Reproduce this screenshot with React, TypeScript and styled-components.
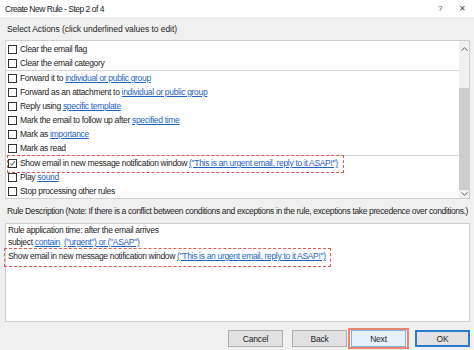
import styled, { createGlobalStyle } from "styled-components";

const GlobalStyle = createGlobalStyle`
  html, body {
    margin: 0;
    padding: 0;
    background: #f0f0f0;
    overflow: hidden;
  }
  body {
    font-family: "Liberation Sans", Arial, sans-serif;
    font-size: 8.5px;
    letter-spacing: -0.32px;
    color: #1e1e1e;
  }
`;

const Dialog = styled.div`
  width: 474px;
  height: 350px;
  display: flex;
  flex-direction: column;
  background: #f0f0f0;
`;

const TitleBar = styled.div`
  height: 17px;
  background: #fff;
  display: flex;
  align-items: center;
  padding-left: 5px;
  color: #222;
`;

const Title = styled.span`
  font-size: 8.5px;
  letter-spacing: -0.5px;
`;

const TitleControls = styled.div`
  margin-left: auto;
  display: flex;
  align-items: center;
  height: 100%;
`;

const TitleBtn = styled.span<{ $w: number }>`
  width: ${(p) => p.$w}px;
  display: flex;
  justify-content: center;
  align-items: center;
  color: #444;
  font-size: 8px;
`;

const Body = styled.div`
  flex: 1;
  display: flex;
  flex-direction: column;
  padding: 0 4px 0 5px;
`;

const SectionLabel = styled.div<{ $h: number; $ls?: number }>`
  height: ${(p) => p.$h}px;
  display: flex;
  align-items: center;
  padding-left: 2px;
  white-space: nowrap;
  letter-spacing: ${(p) => p.$ls ?? -0.32}px;
`;

const ListBox = styled.div`
  height: 159px;
  box-sizing: border-box;
  border: 1px solid #cfcfcf;
  background: #fff;
  display: flex;
`;

const Items = styled.div`
  flex: 1;
  padding-top: 1px;
`;

const Group = styled.div<{ $last?: boolean }>`
  border-bottom: ${(p) => (p.$last ? "none" : "1px solid #d4d4d4")};
`;

const Row = styled.div<{ $marked?: boolean }>`
  position: relative;
  height: 14px;
  display: flex;
  align-items: center;
  gap: 3px;
  padding-left: 2px;
  width: ${(p) => (p.$marked ? "fit-content" : "auto")};
  white-space: nowrap;
  ${(p) =>
    p.$marked &&
    `
    &::after {
      content: "";
      position: absolute;
      left: 1px;
      top: -1px;
      bottom: -3px;
      right: -6px;
      border: 1px dashed #e45a50;
    }
  `}
`;

const Box = styled.span`
  width: 9px;
  height: 9px;
  box-sizing: border-box;
  border: 1px solid #333;
  background: #fff;
  display: flex;
  align-items: center;
  justify-content: center;
  flex-shrink: 0;
`;

const Link = styled.span`
  color: #1f63c4;
  text-decoration: underline;
`;

const Scrollbar = styled.div`
  width: 10px;
  background: #f0f0f0;
  display: flex;
  flex-direction: column;
  align-items: center;
`;

const Arrow = styled.div<{ $h: number }>`
  height: ${(p) => p.$h}px;
  width: 100%;
  display: flex;
  align-items: center;
  justify-content: center;
`;

const Thumb = styled.div`
  margin-top: 32px;
  width: 100%;
  height: 102px;
  background: #cdcdcd;
`;

const DescBox = styled.div`
  height: 99px;
  box-sizing: border-box;
  border: 1px solid #cfcfcf;
  background: #fff;
  padding-left: 2px;
`;

const DescLine = styled.div`
  height: 12px;
  display: flex;
  align-items: center;
  white-space: nowrap;
`;

const MarkedLine = styled.div`
  display: inline-flex;
  align-items: center;
  height: 12px;
  margin-left: -4px;
  padding: 1px 4px 4px 3px;
  border: 1px dashed #e45a50;
  white-space: nowrap;
`;

const ButtonRow = styled.div`
  display: flex;
  justify-content: flex-end;
  align-items: center;
  padding-top: 6px;
`;

const Button = styled.button<{ $ml?: number; $primary?: boolean; $hot?: boolean }>`
  margin-left: ${(p) => p.$ml ?? 0}px;
  width: 55px;
  height: 17px;
  box-sizing: border-box;
  padding: 0;
  font: inherit;
  letter-spacing: -0.2px;
  color: #1e1e1e;
  background: ${(p) => (p.$hot ? "#e5f1fb" : "#e1e1e1")};
  border: ${(p) =>
    p.$primary ? "2px solid #2a7bd0" : p.$hot ? "1px solid #7eb4ea" : "1px solid #adadad"};
`;

const HotFrame = styled.div<{ $ml?: number }>`
  margin-left: ${(p) => p.$ml ?? 0}px;
  border: 2px solid #e9866b;
  padding: 0 1px;
  display: flex;
`;

const Chevron = ({ up }: { up?: boolean }) => (
  <svg width="7" height="4" viewBox="0 0 7 4">
    <polyline
      points={up ? "0.5,3.5 3.5,0.8 6.5,3.5" : "0.5,0.5 3.5,3.2 6.5,0.5"}
      fill="none"
      stroke="#606060"
      strokeWidth="1"
    />
  </svg>
);

const Check = () => (
  <svg width="9" height="9" viewBox="0 0 9 9">
    <polyline points="1.5,4.5 3.5,6.8 7.5,1.5" fill="none" stroke="#222" strokeWidth="1.1" />
  </svg>
);

type Item = { text: string; link?: string; checked?: boolean; marked?: boolean };

const groups: Item[][] = [
  [{ text: "Clear the email flag" }, { text: "Clear the email category" }],
  [
    { text: "Forward it to ", link: "individual or public group" },
    { text: "Forward as an attachment to ", link: "individual or public group" },
    { text: "Reply using ", link: "specific template" },
    { text: "Mark the email to follow up after ", link: "specified time" },
    { text: "Mark as ", link: "importance" },
    { text: "Mark as read" },
  ],
  [
    {
      text: "Show email in new message notification window ",
      link: "(\"This is an urgent email, reply to it ASAP!\")",
      checked: true,
      marked: true,
    },
    { text: "Play ", link: "sound" },
    { text: "Stop processing other rules" },
  ],
];

export default function App() {
  return (
    <Dialog>
      <GlobalStyle />
      <TitleBar>
        <Title>Create New Rule - Step 2 of 4</Title>
        <TitleControls>
          <TitleBtn $w={20}>?</TitleBtn>
          <TitleBtn $w={24}>✕</TitleBtn>
        </TitleControls>
      </TitleBar>
      <Body>
        <SectionLabel $h={23} $ls={-0.05}>
          Select Actions (click underlined values to edit)
        </SectionLabel>
        <ListBox>
          <Items>
            {groups.map((g, gi) => (
              <Group key={gi} $last={gi === groups.length - 1}>
                {g.map((it, i) => (
                  <Row key={i} $marked={it.marked}>
                    <Box>{it.checked && <Check />}</Box>
                    <span>
                      {it.text}
                      {it.link && <Link>{it.link}</Link>}
                    </span>
                  </Row>
                ))}
              </Group>
            ))}
          </Items>
          <Scrollbar>
            <Arrow $h={15}>
              <Chevron up />
            </Arrow>
            <Thumb />
            <Arrow $h={8}>
              <Chevron />
            </Arrow>
          </Scrollbar>
        </ListBox>
        <SectionLabel $h={24} $ls={-0.36}>
          Rule Description (Note: If there is a conflict between conditions and exceptions in the rule, exceptions take
          precedence over conditions.)
        </SectionLabel>
        <DescBox>
          <DescLine>Rule application time: after the email arrives</DescLine>
          <DescLine>
            subject&nbsp;<Link>contain</Link>&nbsp;&nbsp;<Link>("urgent") or ("ASAP")</Link>
          </DescLine>
          <MarkedLine>
            Show email in new message notification window&nbsp;
            <Link>("This is an urgent email, reply to it ASAP!")</Link>
          </MarkedLine>
        </DescBox>
        <ButtonRow>
          <Button>Cancel</Button>
          <Button $ml={9}>Back</Button>
          <HotFrame $ml={1}>
            <Button $hot>Next</Button>
          </HotFrame>
          <Button $ml={6} $primary>
            OK
          </Button>
        </ButtonRow>
      </Body>
    </Dialog>
  );
}
